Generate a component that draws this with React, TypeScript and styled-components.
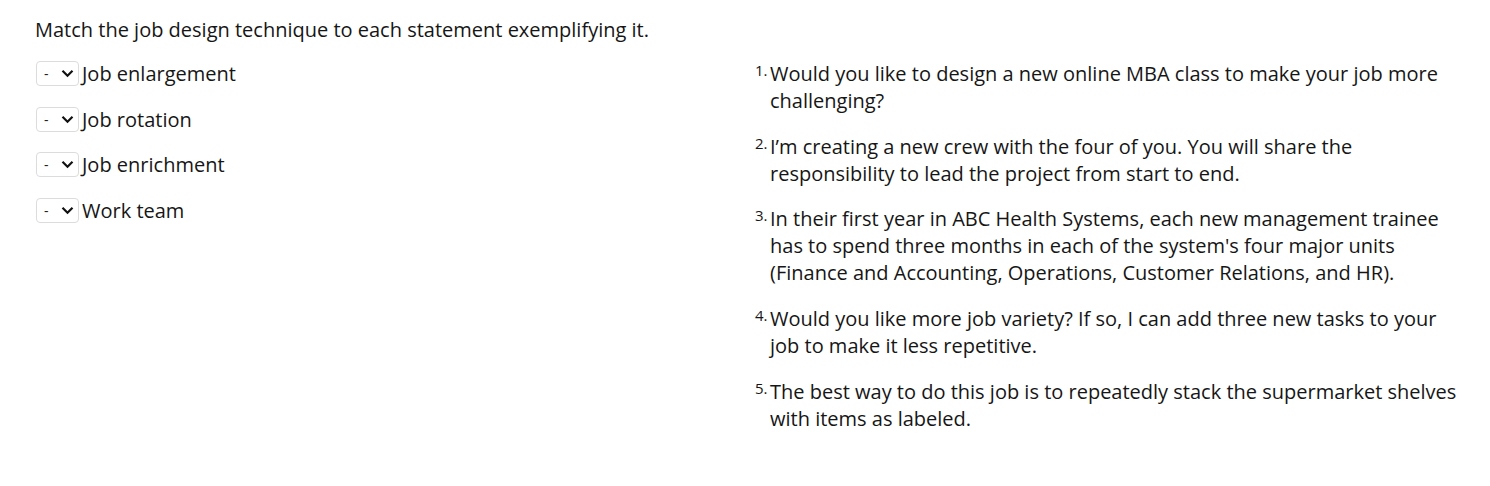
import styled, { createGlobalStyle } from "styled-components";

const GlobalStyle = createGlobalStyle`
  body {
    margin: 0;
    background: #ffffff;
    font-family: "Open Sans", "Liberation Sans", sans-serif;
    color: #161616;
  }
`;

const Page = styled.div`
  padding: 16px 25px 0 35px;
`;

const Prompt = styled.p`
  margin: 0 0 17px;
  font-size: 20px;
  line-height: 27px;
`;

const Columns = styled.div`
  display: grid;
  grid-template-columns: 720px 1fr;
`;

const ChoiceList = styled.div`
  display: flex;
  flex-direction: column;
  gap: 18.7px;
`;

const ChoiceRow = styled.label`
  display: flex;
  align-items: center;
  gap: 3px;
  font-size: 20px;
  line-height: 27px;
`;

const Dropdown = styled.div`
  box-sizing: border-box;
  width: 43px;
  height: 25px;
  margin-left: 1px;
  border: 1px solid #dcdcdc;
  border-radius: 4px;
  display: flex;
  align-items: center;
  justify-content: space-between;
  padding: 0 4px 0 7px;
  font-size: 14px;
  color: #222;
`;

const StatementList = styled.ol`
  list-style: none;
  margin: 0;
  padding: 0;
  display: flex;
  flex-direction: column;
  gap: 18.7px;
`;

const Statement = styled.li`
  display: flex;
  font-size: 20px;
  line-height: 27px;
`;

const Num = styled.span`
  flex: none;
  width: 15px;
  font-size: 15px;
  line-height: 21px;
`;

const choices = ["Job enlargement", "Job rotation", "Job enrichment", "Work team"];

const statements = [
  "Would you like to design a new online MBA class to make your job more challenging?",
  "I\u2019m creating a new crew with the four of you. You will share the responsibility to lead the project from start to end.",
  "In their first year in ABC Health Systems, each new management trainee has to spend three months in each of the system's four major units (Finance and Accounting, Operations, Customer Relations, and HR).",
  "Would you like more job variety? If so, I can add three new tasks to your job to make it less repetitive.",
  "The best way to do this job is to repeatedly stack the supermarket shelves with items as labeled.",
];

function Chevron() {
  return (
    <svg width="13" height="9" viewBox="0 0 13 9">
      <path d="M1.5 1.8 L6.5 6.8 L11.5 1.8" fill="none" stroke="#111" strokeWidth="2.2" />
    </svg>
  );
}

export default function App() {
  return (
    <Page>
      <GlobalStyle />
      <Prompt>Match the job design technique to each statement exemplifying it.</Prompt>
      <Columns>
        <ChoiceList>
          {choices.map((c) => (
            <ChoiceRow key={c}>
              <Dropdown>
                <span>-</span>
                <Chevron />
              </Dropdown>
              {c}
            </ChoiceRow>
          ))}
        </ChoiceList>
        <StatementList>
          {statements.map((s, i) => (
            <Statement key={i}>
              <Num>{i + 1}.</Num>
              <span>{s}</span>
            </Statement>
          ))}
        </StatementList>
      </Columns>
    </Page>
  );
}
